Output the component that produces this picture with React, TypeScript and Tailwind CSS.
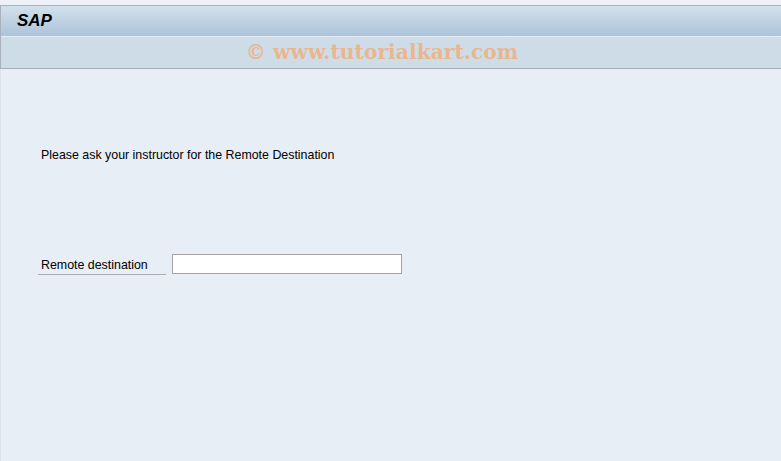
export default function App() {
	return (
		<div className="flex h-[461px] w-[781px] flex-col bg-[#eef1f7] pt-[5px] font-['Liberation_Sans',Arial,sans-serif] text-black">
			<div className="border-t border-l border-[#a7b0bc]">
				<div className="flex h-[30px] items-center bg-gradient-to-b from-[#d2e1ec] to-[#acc3d9] pl-[16px]">
					<span className="text-[17px] font-bold italic">SAP</span>
				</div>
				<div className="h-px bg-[#e6eef5]" />
				<div className="flex h-[32px] items-center justify-center border-b border-[#a5afba] bg-[#cedce7] pr-[18px]">
					<span className="font-['DejaVu_Serif',serif] text-[20.3px] font-bold text-[#e9b78f]">
						© www.tutorialkart.com
					</span>
				</div>
			</div>
			<div className="flex flex-1 flex-col border-l border-[#dde3ea] bg-[#e8eef6] pl-[37px] text-[12.4px]">
				<p className="mt-[79px] pl-[3px] leading-[14px]">
					Please ask your instructor for the Remote Destination
				</p>
				<div className="mt-[92px] flex items-end">
					<label className="w-[128px] border-b border-[#a6acb2] pb-px pl-[3px] leading-[15px]">
						Remote destination
					</label>
					<input
						type="text"
						className="mb-px ml-[6px] h-[20px] w-[230px] border border-[#a3a3a3] bg-white outline-none"
					/>
				</div>
			</div>
		</div>
	);
}
